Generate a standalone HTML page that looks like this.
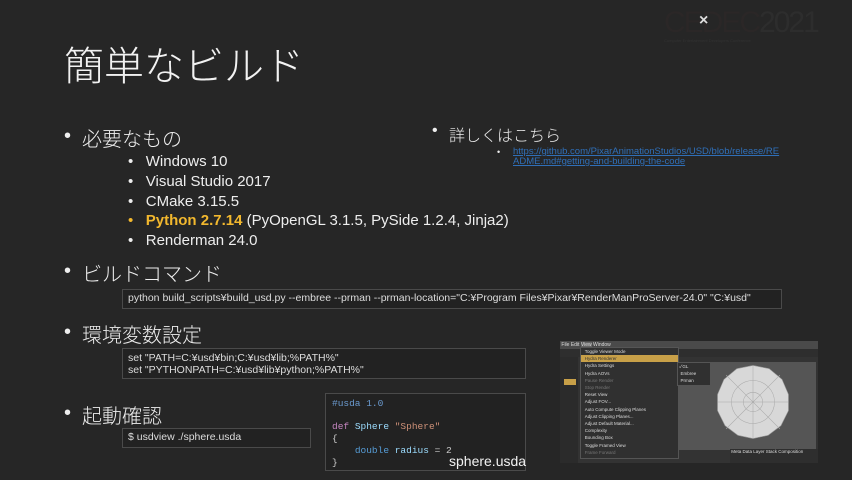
<!DOCTYPE html>
<html><head><meta charset="utf-8"><style>
body{margin:0;width:852px;height:480px;background:#262626;overflow:hidden;position:relative;font-family:"Liberation Sans","Noto Sans CJK JP",sans-serif;color:#eee}
.a{position:absolute;white-space:nowrap}
.jp{font-family:"Noto Sans CJK JP",sans-serif;font-weight:300}
.box{position:absolute;border:1px solid #4a4a4a;background:#222;font-size:10.5px;color:#ddd;padding:2px 5px;box-sizing:border-box;line-height:12px}
.mono{font-family:"Liberation Mono",monospace}
</style></head><body>
<div class="a" style="left:664px;top:6px;font-size:30px;color:#2b2727;letter-spacing:-2px">CEDEC<span style="color:#2d2d2d">2021</span></div>
<div class="a" style="left:699px;top:12px;font-size:16px;color:#ddd;font-weight:bold">×</div>
<div class="a" style="left:664px;top:38px;font-size:4px;color:#333">Computer Entertainment Developers Conference</div>
<div class="a jp" style="left:64px;top:34px;font-size:40px;color:#f2f2f2">簡単なビルド</div>

<div class="a" style="left:64px;top:125px;font-size:20px">•</div>
<div class="a jp" style="left:82px;top:123px;font-size:20px">必要なもの</div>
<div class="a" style="left:128px;top:152px;font-size:15px;line-height:19.8px">
<div>•&nbsp;&nbsp; Windows 10</div>
<div>•&nbsp;&nbsp; Visual Studio 2017</div>
<div>•&nbsp;&nbsp; CMake 3.15.5</div>
<div><span style="color:#f2b82e">•&nbsp;&nbsp; <b>Python 2.7.14</b></span> (PyOpenGL 3.1.5, PySide 1.2.4, Jinja2)</div>
<div>•&nbsp;&nbsp; Renderman 24.0</div>
</div>

<div class="a" style="left:432px;top:122px;font-size:16px">•</div>
<div class="a jp" style="left:449px;top:122px;font-size:16px">詳しくはこちら</div>
<div class="a" style="left:497px;top:147px;font-size:9px">•</div>
<div class="a" style="left:513px;top:147px;font-size:9.5px;line-height:10px;color:#2f6fb8;text-decoration:underline">https://github.com/PixarAnimationStudios/USD/blob/release/RE<br>ADME.md#getting-and-building-the-code</div>

<div class="a" style="left:64px;top:260px;font-size:20px">•</div>
<div class="a jp" style="left:82px;top:258px;font-size:20px">ビルドコマンド</div>
<div class="box" style="left:122px;top:289px;width:660px;height:20px">python build_scripts¥build_usd.py --embree --prman --prman-location="C:¥Program Files¥Pixar¥RenderManProServer-24.0" "C:¥usd"</div>

<div class="a" style="left:64px;top:321px;font-size:20px">•</div>
<div class="a jp" style="left:82px;top:319px;font-size:20px">環境変数設定</div>
<div class="box" style="left:122px;top:348px;width:404px;height:31px;padding-top:3px">set "PATH=C:¥usd¥bin;C:¥usd¥lib;%PATH%"<br>set "PYTHONPATH=C:¥usd¥lib¥python;%PATH%"</div>

<div class="a" style="left:64px;top:402px;font-size:20px">•</div>
<div class="a jp" style="left:82px;top:400px;font-size:20px">起動確認</div>
<div class="box" style="left:122px;top:428px;width:189px;height:20px">$ usdview ./sphere.usda</div>

<div class="box mono" style="left:325px;top:393px;width:201px;height:78px;font-size:9.5px;padding:4px 6px;line-height:11.7px;color:#ccc">
<span style="color:#6b9bd0">#usda 1.0</span><br><br>
<span style="color:#c586c0">def</span> <span style="color:#9cdcfe">Sphere</span> <span style="color:#ce9178">"Sphere"</span><br>{<br>
&nbsp;&nbsp;&nbsp;&nbsp;<span style="color:#569cd6">double</span> <span style="color:#9cdcfe">radius</span> = 2<br>}</div>
<div class="a" style="left:449px;top:453px;font-size:14px;color:#f2f2f2">sphere.usda</div>

<div class="a" style="left:560px;top:341px;width:258px;height:122px;background:#333;overflow:hidden">
<div class="a" style="left:0;top:0;width:258px;height:8px;background:#4a4a4a;font-size:5px;color:#ddd;line-height:8px">&nbsp;File Edit <span style="background:#666">View</span> Window</div>
<div class="a" style="left:0;top:8px;width:258px;height:8px;background:#2e2e2e"></div>
<div class="a" style="left:0;top:16px;width:18px;height:106px;background:#2b2b2b"></div>
<div class="a" style="left:4px;top:38px;width:12px;height:6px;background:#c8a048"></div>
<div class="a" style="left:118px;top:21px;width:138px;height:88px;background:#555"></div>
<svg class="a" style="left:150px;top:18px" width="86" height="86" viewBox="0 0 80 80"><polygon points="40,6 55,9 67,19 73,33 73,48 66,62 54,71 40,74 26,71 14,62 7,48 7,33 13,19 25,9" fill="#d8d8d8" stroke="#999" stroke-width=".5"/><circle cx="40" cy="40" r="20" fill="none" stroke="#aaa" stroke-width=".5"/><circle cx="40" cy="40" r="9" fill="none" stroke="#aaa" stroke-width=".5"/><path d="M40 6V74M7 40H73M15 15L65 65M65 15L15 65" stroke="#aaa" stroke-width=".5"/></svg>
<div class="a" style="left:20px;top:6px;width:97px;height:110px;background:#303030;border:1px solid #555;font-size:4.5px;color:#ddd;line-height:7.2px">
<div>&nbsp;&nbsp;&nbsp;Toggle Viewer Mode</div><div style="background:#c8a048;color:#333">&nbsp;&nbsp;&nbsp;Hydra Renderer</div><div>&nbsp;&nbsp;&nbsp;Hydra Settings</div><div>&nbsp;&nbsp;&nbsp;Hydra AOVs</div><div style="color:#777">&nbsp;&nbsp;&nbsp;Pause Render</div><div style="color:#777">&nbsp;&nbsp;&nbsp;Stop Render</div><div>&nbsp;&nbsp;&nbsp;Reset View</div><div>&nbsp;&nbsp;&nbsp;Adjust FOV...</div><div>&nbsp;&nbsp;&nbsp;Auto Compute Clipping Planes</div><div>&nbsp;&nbsp;&nbsp;Adjust Clipping Planes...</div><div>&nbsp;&nbsp;&nbsp;Adjust Default Material...</div><div>&nbsp;&nbsp;&nbsp;Complexity</div><div>&nbsp;&nbsp;&nbsp;Bounding Box</div><div>&nbsp;&nbsp;&nbsp;Toggle Framed View</div><div style="color:#777">&nbsp;&nbsp;&nbsp;Frame Forward</div></div>
<div class="a" style="left:117px;top:21px;width:32px;height:22px;background:#303030;border:1px solid #555;font-size:4.5px;color:#ddd;line-height:7px">&nbsp;✓GL<br>&nbsp;&nbsp;Embree<br>&nbsp;&nbsp;Prman</div>
<div class="a" style="left:170px;top:108px;width:88px;height:14px;background:#2e2e2e;font-size:4.5px;color:#ddd">&nbsp;Meta Data Layer Stack Composition</div>
</div>
</body></html>
